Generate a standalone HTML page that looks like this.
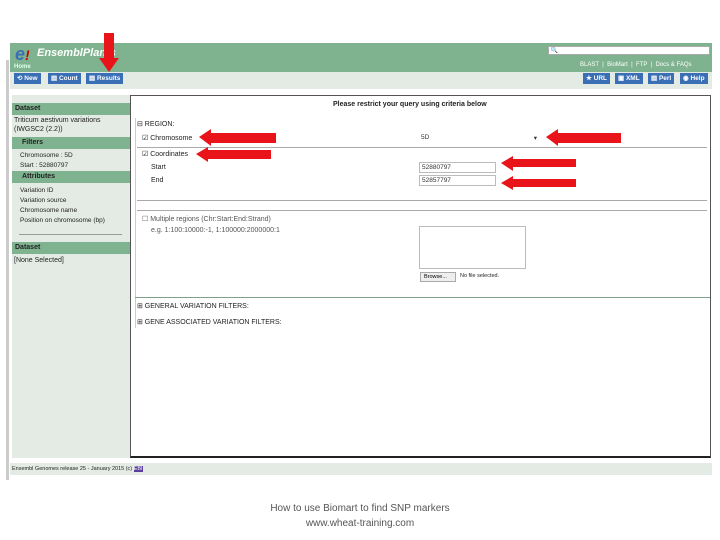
<!DOCTYPE html>
<html><head><style>
*{margin:0;padding:0;box-sizing:border-box}
body{width:720px;height:540px;background:#fff;position:relative;font-family:"Liberation Sans",sans-serif;overflow:hidden}
.a{position:absolute}
.t{font-size:7px;color:#222;white-space:nowrap}
.btn{position:absolute;top:73px;height:11px;background:#3a6fb5;color:#fff;font-size:6.5px;font-weight:bold;padding:1px 3px;white-space:nowrap}
.sh{position:absolute;left:12px;width:118px;height:12px;background:#7fb38f;font-size:7px;font-weight:bold;color:#222;padding:2px 3px}
.inp{position:absolute;background:#fff;border:1px solid #bbb;font-size:6.5px;padding:1px 2px;color:#333}
</style></head><body>
<div class="a" style="left:10px;top:43px;width:702px;height:29px;background:#7fb38f"></div>
<div class="a" style="left:10px;top:72px;width:702px;height:17px;background:#e4ebe5"></div>
<div class="a" style="left:10px;top:89px;width:702px;height:374px;background:#fff"></div>
<div class="a" style="left:6px;top:60px;width:3px;height:420px;background:#ccc"></div>
<div class="a" style="left:15px;top:44px;font-size:18px;font-style:italic;font-weight:bold;color:#3a6fb5">e<span style="color:#c00;font-size:14px">!</span></div>
<div class="a" style="left:37px;top:47px;font-size:11px;font-style:italic;font-weight:bold;color:#fff">EnsemblPlants</div>
<div class="a" style="left:14px;top:64px;font-size:6px;font-weight:bold;color:#dfe">Home</div>
<div class="a" style="left:548px;top:46px;width:162px;height:9px;background:#fff;border:1px solid #aaa;font-size:6px">&nbsp;🔍</div>
<div class="a" style="left:580px;top:62px;font-size:6px;color:#fff">BLAST &nbsp;| &nbsp;BioMart &nbsp;| &nbsp;FTP &nbsp;| &nbsp;Docs &amp; FAQs</div>
<div class="btn" style="left:14px">⟲ New</div>
<div class="btn" style="left:48px">▤ Count</div>
<div class="btn" style="left:86px">▤ Results</div>
<div class="btn" style="left:583px">★ URL</div>
<div class="btn" style="left:615px">▣ XML</div>
<div class="btn" style="left:648px">▤ Perl</div>
<div class="btn" style="left:680px">◉ Help</div>
<div class="a" style="left:12px;top:95px;width:118px;height:363px;background:#e4ebe5"></div>
<div class="sh" style="top:103px">Dataset</div>
<div class="a t" style="left:14px;top:116px;line-height:9px">Triticum aestivum variations<br>(IWGSC2 (2.2))</div>
<div class="sh" style="top:137px;padding-left:10px">Filters</div>
<div class="a t" style="left:20px;top:151px;font-size:6.5px;line-height:10px">Chromosome : 5D<br>Start : 52880797</div>
<div class="sh" style="top:171px;padding-left:10px">Attributes</div>
<div class="a t" style="left:20px;top:186px;font-size:6.5px;line-height:10px">Variation ID<br>Variation source<br>Chromosome name<br>Position on chromosome (bp)</div>
<div class="a" style="left:19px;top:234px;width:103px;height:1px;background:#999"></div>
<div class="sh" style="top:242px">Dataset</div>
<div class="a t" style="left:14px;top:257px">[None Selected]</div>
<div class="a" style="left:130px;top:95px;width:581px;height:363px;border:1px solid #555;border-bottom:2px solid #222;background:#fff"></div>
<div class="a t" style="left:333px;top:101px;font-weight:bold;font-size:7px">Please restrict your query using criteria below</div>
<div class="a" style="left:135px;top:118px;width:1px;height:210px;background:#ccc"></div>
<div class="a t" style="left:137px;top:120px">⊟ REGION:</div>
<div class="a t" style="left:142px;top:134px">☑ Chromosome</div>
<div class="inp" style="left:419px;top:133px;width:120px;height:10px;border:none">5D<span style="float:right">▾</span></div>
<div class="a" style="left:137px;top:147px;width:570px;height:1px;background:#aaa"></div>
<div class="a t" style="left:142px;top:150px">☑ Coordinates</div>
<div class="a t" style="left:151px;top:164px">Start</div>
<div class="a t" style="left:151px;top:177px">End</div>
<div class="inp" style="left:419px;top:162px;width:77px;height:11px">52880797</div>
<div class="inp" style="left:419px;top:175px;width:77px;height:11px">52857797</div>
<div class="a" style="left:137px;top:200px;width:570px;height:1px;background:#aaa"></div>
<div class="a" style="left:137px;top:210px;width:570px;height:1px;background:#aaa"></div>
<div class="a t" style="left:142px;top:215px;color:#555">☐ Multiple regions (Chr:Start:End:Strand)</div>
<div class="a t" style="left:151px;top:227px;color:#555">e.g. 1:100:10000:-1, 1:100000:2000000:1</div>
<div class="inp" style="left:419px;top:226px;width:107px;height:43px"></div>
<div class="a" style="left:420px;top:272px;width:36px;height:10px;background:#eee;border:1px solid #aaa;font-size:5.5px;padding:1px 3px">Browse...</div>
<div class="a t" style="left:460px;top:273px;font-size:5.5px">No file selected.</div>
<div class="a" style="left:135px;top:297px;width:575px;height:1px;background:#7fa08a"></div>
<div class="a t" style="left:137px;top:302px">⊞ GENERAL VARIATION FILTERS:</div>
<div class="a t" style="left:137px;top:318px">⊞ GENE ASSOCIATED VARIATION FILTERS:</div>
<div class="a" style="left:10px;top:463px;width:702px;height:12px;background:#e4ebe5"></div>
<div class="a t" style="left:12px;top:466px;font-size:5.5px">Ensembl Genomes release 25 - January 2015 (c) <span style="background:#5a3fa0;color:#fff">EBI</span></div>
<div class="a" style="left:0;top:501px;width:720px;text-align:center;font-size:10px;color:#555;line-height:15px">How to use Biomart to find SNP markers<br>www.wheat-training.com</div>
<svg class="a" style="left:0;top:0" width="720" height="540">
<g fill="#e8141a">
<polygon points="104,33 114,33 114,58 119,58 109,72 99,58 104,58"/>
<polygon points="199,137 211,129 211,133 276,133 276,143 211,143 211,146"/>
<polygon points="196,154 208,147 208,150 271,150 271,159 208,159 208,162"/>
<polygon points="546,137 558,129 558,133 621,133 621,143 558,143 558,146"/>
<polygon points="501,163 513,156 513,159 576,159 576,167 513,167 513,171"/>
<polygon points="501,183 513,176 513,179 576,179 576,187 513,187 513,190"/>
</g></svg>
</body></html>
